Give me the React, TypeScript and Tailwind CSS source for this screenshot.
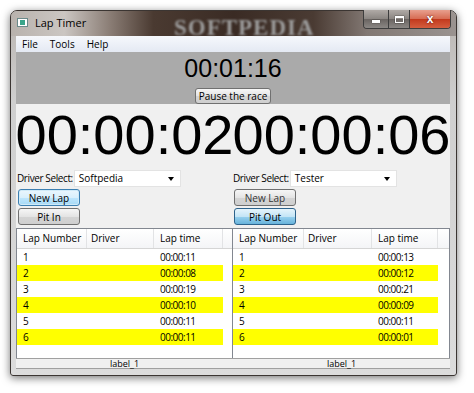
import React from 'react';

type PanelProps = {
    driver: string;
    times: string[];
    cols: string;
    pitLabel: string;
    first: boolean;
};

const grayBtn =
    'border border-[#707070] rounded-[3px] bg-[linear-gradient(#f6f6f6,#e4e4e4_50%,#d4d4d4_51%,#cfcfcf)]';
const blueFocusBtn =
    'border border-[#3c7fb1] rounded-[3px] bg-[linear-gradient(#eaf6fd,#d9f0fc_50%,#bee6fd_51%,#a7d9f5)] shadow-[inset_0_0_0_1px_#cfeaf8]';
const bluePressBtn =
    'border border-[#2c628b] rounded-[3px] bg-[linear-gradient(#e5f4fc,#c4e5f6_50%,#98d1ef_51%,#68b3db)]';

function Panel({ driver, times, cols, pitLabel, first }: PanelProps) {
    return (
        <div className="flex flex-col w-[217px]">
            {/* Driver select */}
            <div className={`flex items-center h-[17px] mt-[4px] ${first ? 'pl-[1px]' : ''}`}>
                <span className="pr-[1px] text-[10px] text-black whitespace-nowrap tracking-[-0.4px]">Driver Select:</span>
                <div className="relative w-[107px] h-[17px] bg-white border border-[#e3e3e3] flex items-center pl-[4px] text-[10px]">
                    {driver}
                    <span className="absolute right-[6px] top-[6px] w-0 h-0 border-l-[3px] border-r-[3px] border-t-[4px] border-l-transparent border-r-transparent border-t-black" />
                </div>
            </div>

            {/* Buttons */}
            <button
                className={`mt-[2px] w-[62px] h-[17px] text-[10px] leading-none ${first ? 'ml-[2px]' : 'ml-[1px]'} ${first ? blueFocusBtn : grayBtn} ${first ? 'text-black' : 'text-[#333]'}`}
            >
                New Lap
            </button>
            <button
                className={`mt-[2px] w-[62px] h-[17px] text-[10px] leading-none ${first ? 'ml-[2px]' : 'ml-[1px]'} ${first ? grayBtn : bluePressBtn}`}
            >
                {pitLabel}
            </button>

            {/* Lap table */}
            <div className={`mt-[3px] h-[130px] bg-white border-t border-[#828790] ${first ? 'border-l border-r' : 'border-r'}`}>
                <div className={`grid ${cols} h-[20px] bg-[linear-gradient(#ffffff,#f4f5f7)] border-b border-[#d5d5d5] text-[10px]`}>
                    <div className="pl-[6px] flex items-center border-r border-[#e2e3e5]">Lap Number</div>
                    <div className="pl-[4px] flex items-center border-r border-[#e2e3e5]">Driver</div>
                    <div className="pl-[6px] flex items-center border-r border-[#e2e3e5]">Lap time</div>
                    <div />
                </div>
                {times.map((t, i) => (
                    <div key={i} className={`grid ${cols} h-[16px] text-[10px]`}>
                        <div className={`pl-[6px] flex items-center ${i % 2 ? 'bg-[#ffff00]' : ''}`}>{i + 1}</div>
                        <div className={i % 2 ? 'bg-[#ffff00]' : ''} />
                        <div className={`pl-[6px] flex items-center tracking-[-0.5px] ${i % 2 ? 'bg-[#ffff00]' : ''}`}>{t}</div>
                        <div />
                    </div>
                ))}
            </div>
        </div>
    );
}

export default function App() {
    return (
        <div className="w-[474px] h-[393px] bg-white overflow-hidden pt-[10px] pl-[10px] font-['Open_Sans',sans-serif] text-black">
            <div className="w-[447px] rounded-t-[7px] rounded-b-[3px] border border-[#3b3532] shadow-[0_2px_8px_rgba(0,0,0,0.55)] bg-[linear-gradient(#b9b4b0,#cfcfcf_25%,#dcdcdc)] flex flex-col">
                {/* Title bar */}
                <div className="relative h-[25px] rounded-t-[6px] bg-[linear-gradient(90deg,#b8b2ad,#cbc6c2_12%,#8c7f77_22%,#4a3a31_32%,#3a2b24_50%,#4a3b33_68%,#827873_80%,#9a9390)] flex items-start">
                    <div className="mt-[7px] ml-[6px] w-[11px] h-[9px] bg-white border border-[#6a8a8a] flex items-center justify-center">
                        <div className="w-[5px] h-[5px] bg-[#3aa58a]" />
                    </div>
                    <span className="ml-[7px] mt-[4px] text-[11px] text-black">Lap Timer</span>
                    <span className="absolute left-[163px] top-[0px] text-[23px] font-bold tracking-[1px] text-[#9c9c9c] blur-[1.2px] font-['Liberation_Serif',serif]">
                        SOFTPEDIA
                    </span>
                    {/* Caption buttons */}
                    <div className="absolute right-[5px] top-[-1px] flex h-[19px] rounded-b-[4px] overflow-hidden border border-[#3d3d3d] border-t-0">
                        <div className="w-[25px] bg-[linear-gradient(#b0aaa6,#8a8581_50%,#6a6461_51%,#8b8784)] border-r border-[#3d3d3d] flex items-center justify-center">
                            <div className="w-[8px] h-[3px] bg-white mt-[5px] shadow-[0_0_1px_#000]" />
                        </div>
                        <div className="w-[21px] bg-[linear-gradient(#b0aaa6,#8a8581_50%,#6a6461_51%,#8b8784)] border-r border-[#3d3d3d] flex items-center justify-center">
                            <div className="w-[9px] h-[7px] border border-white border-t-[2px] shadow-[0_0_1px_#000]" />
                        </div>
                        <div className="w-[40px] bg-[linear-gradient(#e8a08e,#d66b52_50%,#c2391d_51%,#d45d3e)] flex items-center justify-center text-white text-[12px] font-bold font-['Liberation_Sans',sans-serif] leading-none [text-shadow:0_0_2px_#400]">
                            x
                        </div>
                    </div>
                </div>

                {/* Client area */}
                <div className="ml-[5px] mr-[6px] mb-[6px] bg-[#f0f0f0] flex flex-col">
                    {/* Menu */}
                    <div className="h-[16px] bg-[linear-gradient(#f6f8fc,#e4e9f3)] flex items-center text-[10px] pl-[6px] gap-[12px]">
                        <span>File</span>
                        <span>Tools</span>
                        <span>Help</span>
                    </div>

                    {/* Race clock */}
                    <div className="h-[52px] bg-[#aaaaaa] flex flex-col items-center">
                        <span className="text-[25px] leading-none mt-[4px] font-['Liberation_Sans',sans-serif]">00:01:16</span>
                        <button className={`mt-[7px] w-[76px] h-[17px] text-[10px] leading-none ${grayBtn}`}>Pause the race</button>
                    </div>

                    {/* Driver clocks */}
                    <div className="h-[62px] flex items-center font-['Liberation_Sans',sans-serif]">
                        <div className="w-[217px] flex justify-center">
                            <span className="text-[56px] leading-none whitespace-nowrap">00:00:02</span>
                        </div>
                        <div className="w-[217px] flex justify-center">
                            <span className="text-[56px] leading-none whitespace-nowrap">00:00:06</span>
                        </div>
                    </div>

                    {/* Panels */}
                    <div className="flex">
                        <Panel
                            first
                            driver="Softpedia"
                            pitLabel="Pit In"
                            cols="grid-cols-[70px_67px_69px_1fr]"
                            times={['00:00:11', '00:00:08', '00:00:19', '00:00:10', '00:00:11', '00:00:11']}
                        />
                        <Panel
                            first={false}
                            driver="Tester"
                            pitLabel="Pit Out"
                            cols="grid-cols-[71px_68px_66px_1fr]"
                            times={['00:00:13', '00:00:12', '00:00:21', '00:00:09', '00:00:11', '00:00:01']}
                        />
                    </div>

                    {/* Status labels */}
                    <div className="h-[11px] flex border-t border-b border-[#a0a0a0] text-[9px] leading-none">
                        <div className="w-[217px] flex items-center justify-center">label_1</div>
                        <div className="w-[217px] flex items-center justify-center">label_1</div>
                    </div>
                </div>
            </div>
        </div>
    );
}
